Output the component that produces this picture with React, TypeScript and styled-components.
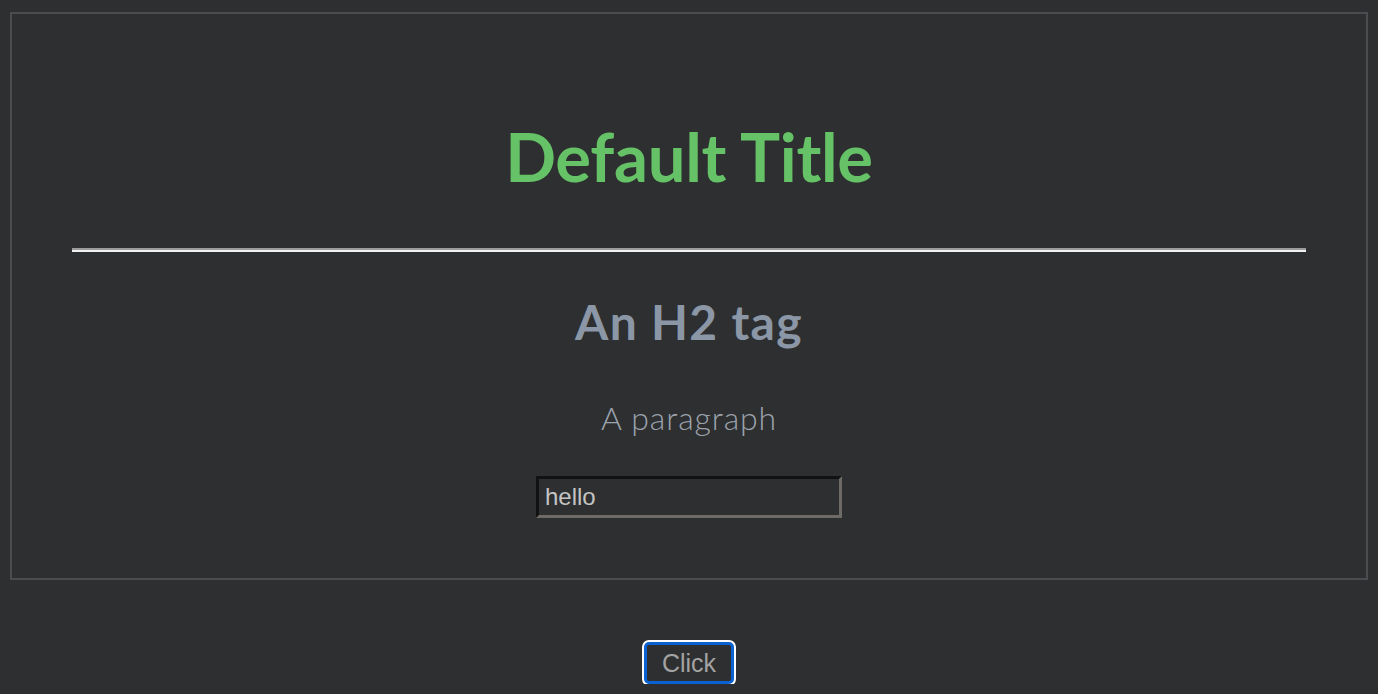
import React from "react";
import styled, { createGlobalStyle } from "styled-components";

const GlobalStyle = createGlobalStyle`
  html, body {
    margin: 0;
    padding: 0;
    background: #2e2f31;
  }
  body {
    padding: 12px 10px 0 10px;
    font-family: Lato, "Noto Sans", sans-serif;
  }
`;

const Page = styled.div`
  display: flex;
  flex-direction: column;
  align-items: center;
`;

const Card = styled.section`
  box-sizing: border-box;
  width: 100%;
  border: 2px solid #4a4c4f;
  padding: 102px 60px 60px;
  display: flex;
  flex-direction: column;
  align-items: center;
`;

const Title = styled.h1`
  margin: 0;
  font-family: Lato, "Noto Sans", sans-serif;
  font-weight: 700;
  font-size: 67px;
  line-height: 1.2;
  letter-spacing: -0.3px;
  color: #66c266;
  text-align: center;
`;

const Rule = styled.hr`
  align-self: stretch;
  margin: 52px 0 0;
  height: 0;
  border-style: solid;
  border-width: 2px 0;
  border-top-color: #9c9c9c;
  border-bottom-color: #f2f2f2;
`;

const Subtitle = styled.h2`
  margin: 41px 0 0;
  font-family: Lato, "Noto Sans", sans-serif;
  font-weight: 700;
  font-size: 48px;
  line-height: 1.2;
  letter-spacing: 1.3px;
  color: #8b97a6;
  text-align: center;
`;

const Paragraph = styled.p`
  margin: 48px 0 0;
  font-family: Lato, "Noto Sans", sans-serif;
  font-weight: 300;
  font-size: 32px;
  line-height: 1.2;
  letter-spacing: 0.9px;
  color: #9ca3ad;
  text-align: center;
`;

const TextInput = styled.input`
  box-sizing: border-box;
  margin-top: 39px;
  width: 306px;
  height: 42px;
  padding: 0 6px;
  border-width: 3px;
  border-style: solid;
  border-top-color: #121212;
  border-left-color: #121212;
  border-bottom-color: #6e6a65;
  border-right-color: #6e6a65;
  background: #2e2f31;
  color: #c4c4c4;
  font-family: "Liberation Sans", Arial, sans-serif;
  font-size: 24px;
  outline: none;
`;

const Button = styled.button`
  box-sizing: border-box;
  margin-top: 62px;
  width: 90px;
  height: 42px;
  padding: 0;
  border: 3px solid #0a62d2;
  border-radius: 5px;
  box-shadow: 0 0 0 2px #ffffff;
  background: #2e2f31;
  color: #a3a3a3;
  font-family: "Liberation Sans", Arial, sans-serif;
  font-size: 25px;
  cursor: pointer;
`;

export default function App() {
  return (
    <Page>
      <GlobalStyle />
      <Card>
        <Title>Default Title</Title>
        <Rule />
        <Subtitle>An H2 tag</Subtitle>
        <Paragraph>A paragraph</Paragraph>
        <TextInput defaultValue="hello" />
      </Card>
      <Button>Click</Button>
    </Page>
  );
}
